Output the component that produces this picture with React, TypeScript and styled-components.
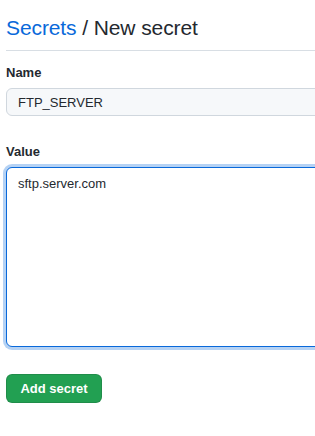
import React from "react";
import styled, { createGlobalStyle } from "styled-components";

const GlobalStyle = createGlobalStyle`
  body {
    margin: 0;
    background: #ffffff;
    font-family: "Liberation Sans", Arial, sans-serif;
    color: #24292f;
    overflow: hidden;
  }
`;

const Page = styled.div`
  width: 315px;
  height: 436px;
  padding: 12px 0 0 6px;
  box-sizing: border-box;
  overflow: hidden;
`;

const Subhead = styled.div`
  display: flex;
  align-items: center;
  height: 32px;
  margin-right: -20px;
  padding-bottom: 6px;
  border-bottom: 1px solid #d8dee4;
`;

const Heading = styled.h2`
  margin: 0;
  font-size: 21px;
  font-weight: 400;
  letter-spacing: -0.1px;
  white-space: nowrap;
`;

const Crumb = styled.a`
  color: #0969da;
  text-decoration: none;
`;

const Form = styled.form`
  display: flex;
  flex-direction: column;
`;

const Group = styled.div<{ $top: number }>`
  display: flex;
  flex-direction: column;
  margin-top: ${(p) => p.$top}px;
`;

const Label = styled.label`
  font-size: 13px;
  font-weight: 700;
  line-height: 20px;
  margin-bottom: 5px;
`;

const TextInput = styled.input`
  box-sizing: border-box;
  width: 340px;
  height: 28px;
  padding: 0 11px;
  font-family: inherit;
  font-size: 13px;
  color: #24292f;
  background: #f6f8fa;
  border: 1px solid #d0d7de;
  border-radius: 6px;
  outline: none;
`;

const TextArea = styled.textarea`
  box-sizing: border-box;
  width: 340px;
  height: 180px;
  padding: 6px 11px;
  font-family: inherit;
  font-size: 13px;
  line-height: 20px;
  color: #24292f;
  background: #ffffff;
  border: 1px solid #0969da;
  border-radius: 6px;
  box-shadow: 0 0 0 3px rgba(9, 105, 218, 0.3);
  resize: none;
  outline: none;
`;

const Button = styled.button`
  align-self: flex-start;
  margin-top: 27px;
  width: 96px;
  height: 29px;
  padding: 0;
  font-family: inherit;
  font-size: 13px;
  font-weight: 700;
  color: #ffffff;
  background: #22a052;
  border: 1px solid rgba(27, 31, 36, 0.15);
  border-radius: 6px;
  cursor: pointer;
`;

export default function App() {
  return (
    <>
      <GlobalStyle />
      <Page>
        <Subhead>
          <Heading>
            <Crumb href="#">Secrets</Crumb> / New secret
          </Heading>
        </Subhead>
        <Form onSubmit={(e) => e.preventDefault()}>
          <Group $top={12}>
            <Label htmlFor="name">Name</Label>
            <TextInput id="name" defaultValue="FTP_SERVER" readOnly />
          </Group>
          <Group $top={26}>
            <Label htmlFor="value">Value</Label>
            <TextArea id="value" defaultValue="sftp.server.com" readOnly />
          </Group>
          <Button type="submit">Add secret</Button>
        </Form>
      </Page>
    </>
  );
}
